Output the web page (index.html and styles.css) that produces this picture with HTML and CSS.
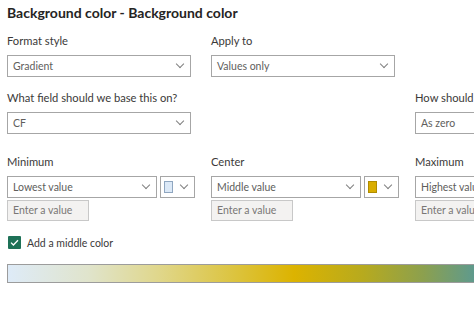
FILE: index.html
```html
<!DOCTYPE html>
<html lang="en">
<head>
    <meta charset="UTF-8">
    <title>Background color</title>
    <link rel="stylesheet" href="styles.css">
</head>
<body>
    <div class="panel">
        <h1 class="title">Background color - Background color</h1>

        <div class="row row-top">
            <div class="field">
                <div class="label">Format style</div>
                <div class="select wide"><span>Gradient</span><i class="chev"></i></div>
            </div>
            <div class="field">
                <div class="label">Apply to</div>
                <div class="select wide"><span>Values only</span><i class="chev"></i></div>
            </div>
        </div>

        <div class="row row-base">
            <div class="field">
                <div class="label">What field should we base this on?</div>
                <div class="select wide"><span>CF</span><i class="chev"></i></div>
            </div>
            <div class="field"></div>
            <div class="field">
                <div class="label">How should blank values be formatted?</div>
                <div class="select wide"><span>As zero</span><i class="chev"></i></div>
            </div>
        </div>

        <div class="row row-stops">
            <div class="field">
                <div class="label">Minimum</div>
                <div class="stop-line">
                    <div class="select"><span>Lowest value</span><i class="chev"></i></div>
                    <div class="color-btn"><b class="swatch swatch-min"></b><i class="chev"></i></div>
                </div>
                <div class="value-box">Enter a value</div>
            </div>
            <div class="field">
                <div class="label">Center</div>
                <div class="stop-line">
                    <div class="select"><span>Middle value</span><i class="chev"></i></div>
                    <div class="color-btn"><b class="swatch swatch-mid"></b><i class="chev"></i></div>
                </div>
                <div class="value-box">Enter a value</div>
            </div>
            <div class="field">
                <div class="label">Maximum</div>
                <div class="stop-line">
                    <div class="select"><span>Highest value</span><i class="chev"></i></div>
                    <div class="color-btn"><b class="swatch swatch-max"></b><i class="chev"></i></div>
                </div>
                <div class="value-box">Enter a value</div>
            </div>
        </div>

        <label class="check">
            <span class="box">
                <svg width="9" height="7" viewBox="0 0 9 7"><path d="M1 3.6 L3.4 6 L8 1.2" fill="none" stroke="#fff" stroke-width="1.3"/></svg>
            </span>
            Add a middle color
        </label>

        <div class="gradient-bar"></div>
    </div>
</body>
</html>
```

FILE: styles.css
```css
html, body {
    margin: 0;
    padding: 0;
    background: #fff;
    overflow: hidden;
}
body {
    font-family: "Lato", "Open Sans", sans-serif;
    color: #252423;
}
.panel {
    width: 467px;
    height: 311px;
    padding: 0 0 0 7px;
    overflow: hidden;
}
.title {
    margin: 0;
    padding-top: 3px;
    height: 22px;
    font-size: 14px;
    font-weight: 700;
    line-height: 20px;
    color: #252423;
    white-space: nowrap;
}
.row {
    display: grid;
    grid-template-columns: 204px 204px 220px;
}
.row-top {
    margin-top: 8px;
}
.row-base {
    margin-top: 13px;
}
.row-stops {
    margin-top: 20px;
}
.label {
    font-size: 11.2px;
    line-height: 16px;
    height: 16px;
    margin-bottom: 6px;
    color: #3b3a39;
    white-space: nowrap;
}
.select {
    box-sizing: border-box;
    display: flex;
    align-items: center;
    justify-content: space-between;
    height: 22px;
    width: 150px;
    padding: 0 6px 0 5px;
    border: 1px solid #a6a6a6;
    font-size: 10.5px;
    color: #605e5c;
    white-space: nowrap;
    overflow: hidden;
}
.select.wide {
    width: 184px;
}
.chev {
    flex: none;
    width: 5px;
    height: 5px;
    margin: -4px 1px 0 8px;
    border-right: 1px solid #808080;
    border-bottom: 1px solid #808080;
    transform: rotate(45deg);
}
.stop-line {
    display: flex;
    gap: 3px;
}
.color-btn {
    box-sizing: border-box;
    display: flex;
    align-items: center;
    justify-content: space-between;
    width: 35px;
    height: 22px;
    padding: 0 6px 0 3px;
    border: 1px solid #a6a6a6;
}
.swatch {
    width: 9px;
    height: 10px;
    border: 1px solid #9a9a9a;
}
.swatch-min {
    background: #dce9f7;
    border-color: #8fa6c0;
}
.swatch-mid {
    background: #d9ad00;
    border-color: #b08c00;
}
.swatch-max {
    background: #5e9a8e;
}
.value-box {
    box-sizing: border-box;
    margin-top: 2px;
    width: 82px;
    height: 21px;
    padding: 0 5px;
    border: 1px solid #c8c8c8;
    background: #f3f2f1;
    font-size: 10.5px;
    line-height: 19px;
    color: #797775;
    white-space: nowrap;
    overflow: hidden;
}
.check {
    display: flex;
    align-items: center;
    gap: 6px;
    margin-top: 15px;
    margin-left: 1px;
    height: 13px;
    font-size: 10.5px;
    color: #3b3a39;
}
.box {
    display: flex;
    align-items: center;
    justify-content: center;
    width: 13px;
    height: 13px;
    background: #1e7157;
    border-radius: 1px;
}
.gradient-bar {
    box-sizing: border-box;
    margin-top: 15px;
    width: 580px;
    height: 19px;
    border: 1px solid #9c9c9c;
    background: linear-gradient(to right,
        #deebf8 0px,
        #e0e4cc 80px,
        #e0d78c 150px,
        #dcc440 225px,
        #dcb300 286px,
        #b7aa1e 355px,
        #8ca04e 415px,
        #5e9a8e 467px,
        #3c9097 573px);
}
```
